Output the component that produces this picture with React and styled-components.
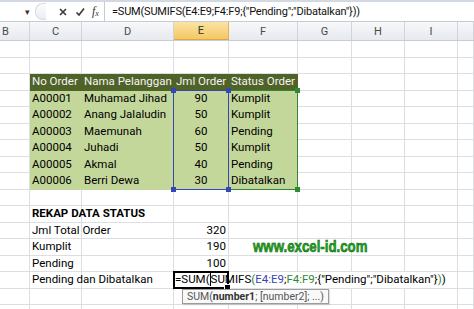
import React from 'react';
import styled, { createGlobalStyle, css } from 'styled-components';

const GlobalStyle = createGlobalStyle`
    html, body {
        margin: 0;
        padding: 0;
        background: #ffffff;
        overflow: hidden;
    }
    body {
        font-family: Roboto, "Liberation Sans", sans-serif;
    }
`;

const COLS = '30px 52px 92px 55px 69px 54px 53px 53px 1fr';
const LETTERS = ['B', 'C', 'D', 'E', 'F', 'G', 'H', 'I', ''];
const BLUE = '#3447b5';
const GREEN = '#2f8a2f';

const orders = [
    ['A00001', 'Muhamad Jihad', 90, 'Kumplit'],
    ['A00002', 'Anang Jalaludin', 50, 'Kumplit'],
    ['A00003', 'Maemunah', 60, 'Pending'],
    ['A00004', 'Juhadi', 50, 'Kumplit'],
    ['A00005', 'Akmal', 40, 'Pending'],
    ['A00006', 'Berri Dewa', 30, 'Dibatalkan'],
];

// sheet contents keyed by row-col (col 0 = B)
const buildSheet = () => {
    const sheet = {};
    const put = (r, c, cell) => {
        sheet[`${r}-${c}`] = cell;
    };
    ['No Order', 'Nama Pelanggan', 'Jml Order', 'Status Order'].forEach((t, i) =>
        put(3, i + 1, { text: t, fill: 'head' })
    );
    orders.forEach((row, i) => {
        row.forEach((t, j) =>
            put(4 + i, j + 1, { text: t, fill: 'data', align: j === 2 ? 'center' : 'left' })
        );
    });
    put(11, 1, { text: 'REKAP DATA STATUS', bold: true });
    put(12, 1, { text: 'Jml Total Order' });
    put(12, 3, { text: 320, align: 'right' });
    put(13, 1, { text: 'Kumplit' });
    put(13, 3, { text: 190, align: 'right' });
    put(14, 1, { text: 'Pending' });
    put(14, 3, { text: 100, align: 'right' });
    put(15, 1, { text: 'Pending dan Dibatalkan' });
    return sheet;
};

const sheet = buildSheet();
const ROWS = 17;

function App() {
    const cells = [];
    for (let r = 1; r <= ROWS; r++) {
        for (let c = 0; c < LETTERS.length; c++) {
            const cell = sheet[`${r}-${c}`] || {};
            const editing = r === 15 && c === 3;
            cells.push(
                <Cell
                    key={`${r}-${c}`}
                    $r={r}
                    $c={c + 1}
                    $fill={cell.fill}
                    $align={cell.align}
                    $bold={cell.bold}
                    $layer={editing ? 2 : cell.text !== undefined ? 1 : 0}
                >
                    {editing ? (
                        <EditText>
                            =SUM(<Caret />SUMIFS<Paren>(</Paren>
                            <Ref $color={BLUE}>E4:E9</Ref>;<Ref $color={GREEN}>F4:F9</Ref>
                            {';{"Pending";"Dibatalkan"}'}
                            <Paren>)</Paren>)
                        </EditText>
                    ) : (
                        cell.text
                    )}
                </Cell>
            );
        }
    }

    return (
        <>
            <GlobalStyle />
            <Window>
                <FormulaBar>
                    <NameBox>
                        <Arrow>▾</Arrow>
                    </NameBox>
                    <Controls>
                        <Grabber />
                        <CtrlIcon viewBox="0 0 10 10">
                            <path d="M2 2 L8 8 M8 2 L2 8" stroke="#3c3c3c" strokeWidth="1.7" />
                        </CtrlIcon>
                        <CtrlIcon viewBox="0 0 10 10">
                            <path d="M1.5 5.5 L4 8 L9 1.5" stroke="#3c3c3c" strokeWidth="1.7" fill="none" />
                        </CtrlIcon>
                        <Fx>
                            f<sub>x</sub>
                        </Fx>
                    </Controls>
                    <FormulaInput>
                        =SUM(SUMIFS(E4:E9;F4:F9;{'{"Pending";"Dibatalkan"}'}))
                    </FormulaInput>
                </FormulaBar>

                <ColumnHeads>
                    {LETTERS.map((l, i) => (
                        <ColHead key={i} $active={l === 'E'} $cut={i === 0}>
                            {l}
                        </ColHead>
                    ))}
                </ColumnHeads>

                <Sheet>
                    {cells}

                    <RangeBox $col="5" $row="4 / 10" $color={GREEN}>
                        <Handle $color={GREEN} $pos="tr" />
                        <Handle $color={GREEN} $pos="br" />
                    </RangeBox>
                    <RangeBox $col="4" $row="4 / 10" $color={BLUE}>
                        <Handle $color={BLUE} $pos="tl" />
                        <Handle $color={BLUE} $pos="tr" />
                        <Handle $color={BLUE} $pos="bl" />
                        <Handle $color={BLUE} $pos="br" />
                    </RangeBox>

                    <ActiveCell>
                        <FillHandle />
                    </ActiveCell>

                    <Watermark>www.excel-id.com</Watermark>

                    <Tooltip>
                        SUM(<b>number1</b>; [number2]; ...)
                    </Tooltip>
                </Sheet>
            </Window>
        </>
    );
}

const Window = styled.div`
    width: 474px;
    height: 309px;
    overflow: hidden;
    background: #ffffff;
`;

const FormulaBar = styled.div`
    display: flex;
    height: 19px;
    border-top: 2px solid #d3d9e1;
    background: #ffffff;
`;

const NameBox = styled.div`
    width: 35px;
    display: flex;
    align-items: center;
    justify-content: flex-end;
    padding-right: 5px;
    box-sizing: border-box;
`;

const Arrow = styled.span`
    font-size: 9px;
    color: #333333;
`;

const Controls = styled.div`
    width: 70px;
    display: flex;
    align-items: center;
    gap: 7px;
    box-sizing: border-box;
    border-right: 1px solid #c5cbd3;
`;

const Grabber = styled.div`
    width: 10px;
    height: 15px;
    border-radius: 8px 0 0 8px;
    border: 1px solid #d6dbe2;
    border-right: none;
    background: linear-gradient(#fbfcfd, #e9edf2);
    margin-right: 5px;
`;

const CtrlIcon = styled.svg`
    width: 10px;
    height: 10px;
`;

const Fx = styled.span`
    font-family: "Liberation Serif", serif;
    font-style: italic;
    font-size: 12px;
    color: #333333;

    sub {
        font-size: 8px;
        vertical-align: -1px;
    }
`;

const FormulaInput = styled.div`
    flex: 1;
    display: flex;
    align-items: center;
    padding-left: 7px;
    font-size: 11px;
    letter-spacing: -0.2px;
    color: #111111;
    white-space: nowrap;
`;

const ColumnHeads = styled.div`
    display: grid;
    grid-template-columns: ${COLS};
    height: 18px;
    border-top: 1px solid #c6ccd4;
    border-bottom: 1px solid #c6ccd4;
    background: linear-gradient(#f7f8fa, #e6e9ee);
`;

const ColHead = styled.div`
    display: flex;
    align-items: center;
    justify-content: ${(p) => (p.$cut ? 'flex-start' : 'center')};
    padding-left: ${(p) => (p.$cut ? '2px' : '0')};
    font-size: 11px;
    color: #4a4a4a;
    border-right: 1px solid #d0d5dc;
    ${(p) =>
        p.$active &&
        css`
            background: linear-gradient(#fbe4a4, #f3c764);
            border-right-color: #e0b450;
            border-bottom: 1px solid #e0a93a;
            color: #333333;
        `}
`;

const Sheet = styled.div`
    display: grid;
    grid-template-columns: ${COLS};
    grid-auto-rows: 16.5px;
`;

const fills = {
    head: '#4f6228',
    data: '#c4d79b',
};

const Cell = styled.div`
    grid-column: ${(p) => p.$c};
    grid-row: ${(p) => p.$r};
    box-sizing: border-box;
    border-right: 1px solid ${(p) => fills[p.$fill] || '#dcdee1'};
    border-bottom: 1px solid ${(p) => fills[p.$fill] || '#dcdee1'};
    background: ${(p) => fills[p.$fill] || '#ffffff'};
    color: ${(p) => (p.$fill === 'head' ? '#f4f4f4' : '#000000')};
    font-size: 11.5px;
    font-weight: ${(p) => (p.$bold ? 700 : 400)};
    line-height: 15.5px;
    padding: 0 2px;
    text-align: ${(p) => p.$align || 'left'};
    white-space: nowrap;
    overflow: visible;
    z-index: ${(p) => p.$layer};
`;

const EditText = styled.span`
    display: inline-block;
    background: #ffffff;
    padding-right: 4px;
    margin-left: -1px;
`;

const Caret = styled.span`
    display: inline-block;
    width: 0;
    height: 14px;
    border-left: 1px solid #000000;
    vertical-align: -3px;
`;

const Ref = styled.span`
    color: ${(p) => p.$color};
`;

const Paren = styled.span`
    color: ${GREEN};
`;

const RangeBox = styled.div`
    grid-column: ${(p) => p.$col};
    grid-row: ${(p) => p.$row};
    position: relative;
    border: 1.5px solid ${(p) => p.$color};
    margin: -1px 0 0 -1px;
    z-index: 3;
    pointer-events: none;
`;

const Handle = styled.span`
    position: absolute;
    width: 5px;
    height: 5px;
    background: ${(p) => p.$color};
    ${(p) => (p.$pos[0] === 't' ? 'top: -3px;' : 'bottom: -3px;')}
    ${(p) => (p.$pos[1] === 'l' ? 'left: -3px;' : 'right: -3px;')}
`;

const ActiveCell = styled.div`
    grid-column: 4;
    grid-row: 15;
    position: relative;
    border: 2px solid #000000;
    margin: -1px 0 0 -1px;
    z-index: 3;
    pointer-events: none;
`;

const FillHandle = styled.span`
    position: absolute;
    right: -4px;
    bottom: -4px;
    width: 5px;
    height: 5px;
    background: #000000;
    border: 1px solid #ffffff;
`;

const Watermark = styled.div`
    grid-column: 5 / span 4;
    grid-row: 13;
    justify-self: start;
    align-self: center;
    margin-left: 24px;
    z-index: 4;
    font-family: "Liberation Sans", Arial, sans-serif;
    font-weight: 700;
    font-size: 17px;
    line-height: 16px;
    color: #1fa31f;
    -webkit-text-stroke: 0.6px #0d6a0d;
    transform: scaleX(0.78);
    transform-origin: left center;
    white-space: nowrap;
`;

const Tooltip = styled.div`
    grid-column: 4 / span 5;
    grid-row: 16;
    justify-self: start;
    align-self: center;
    margin-left: 8px;
    z-index: 4;
    height: 13px;
    padding: 0 4px;
    border: 1px solid #9c9c9c;
    background: #f9f9f9;
    box-shadow: 1px 1px 1px rgba(0, 0, 0, 0.12);
    color: #555555;
    font-size: 10.5px;
    line-height: 13px;
    white-space: nowrap;

    b {
        color: #333333;
    }
`;

export default App;
